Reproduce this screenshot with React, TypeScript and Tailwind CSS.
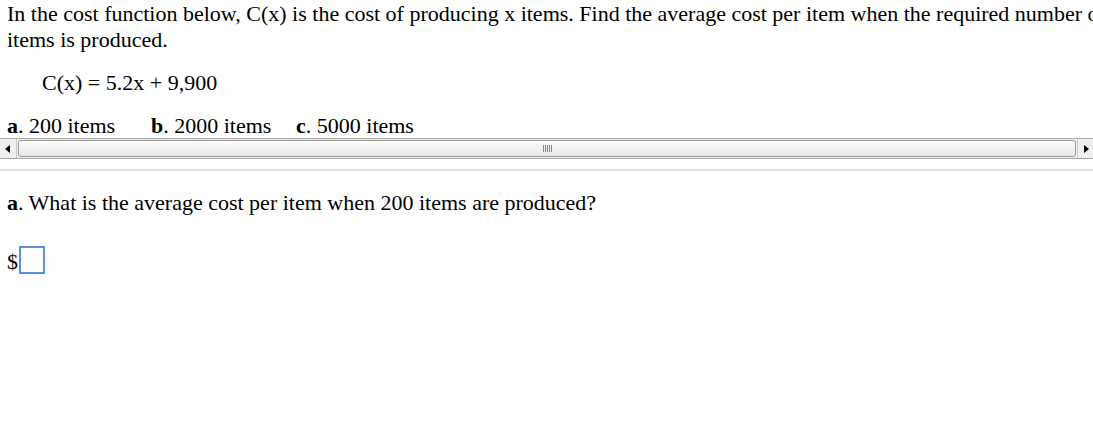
export default function App() {
  return (
    <div className="w-[1093px] h-[442px] bg-white overflow-hidden text-black font-['Liberation_Serif',serif] text-[22px] leading-[26px]">
      {/* Question stem */}
      <div className="px-[7px] pt-[1px] whitespace-nowrap">
        <p>
          In the cost function below, C(x) is the cost of producing x items. Find the average cost per item when the
          required number of
        </p>
        <p>items is produced.</p>
      </div>

      {/* Formula */}
      <div className="pl-[42px] pt-[17px]">C(x) = 5.2x + 9,900</div>

      {/* Parts */}
      <div className="flex pl-[7px] pt-[17px]">
        <span className="w-[144px]">
          <b>a</b>. 200 items
        </span>
        <span className="w-[145px]">
          <b>b</b>. 2000 items
        </span>
        <span>
          <b>c</b>. 5000 items
        </span>
      </div>

      {/* Horizontal scrollbar */}
      <div className="flex h-[21px] border-y border-[#a9a9a9] bg-[#f0f0f0] mt-[-1px]">
        <div className="w-[17px] flex items-center justify-center border-r border-[#c8c8c8]">
          <svg width="6" height="8" viewBox="0 0 6 8">
            <path d="M5 0 L0 4 L5 8 Z" fill="#000" />
          </svg>
        </div>
        <div className="flex-1 px-[1px] py-[1px]">
          <div className="h-full rounded-[3px] border border-[#9a9a9a] bg-gradient-to-b from-[#fdfdfd] to-[#e6e6e6] flex items-center justify-center">
            <div className="flex gap-[1px]">
              <span className="w-[1px] h-[7px] bg-[#8a8a8a]" />
              <span className="w-[1px] h-[7px] bg-[#8a8a8a]" />
              <span className="w-[1px] h-[7px] bg-[#8a8a8a]" />
              <span className="w-[1px] h-[7px] bg-[#8a8a8a]" />
              <span className="w-[1px] h-[7px] bg-[#8a8a8a]" />
            </div>
          </div>
        </div>
        <div className="w-[16px] flex items-center justify-center border-l border-[#c8c8c8]">
          <svg width="6" height="8" viewBox="0 0 6 8">
            <path d="M1 0 L6 4 L1 8 Z" fill="#000" />
          </svg>
        </div>
      </div>

      {/* Divider */}
      <div className="mt-[10px] h-[2px] bg-[#e0e0e0]" />

      {/* Question part a */}
      <div className="pl-[7px] pt-[19px]">
        <b>a</b>. What is the average cost per item when 200 items are produced?
      </div>

      {/* Answer */}
      <div className="flex items-end pl-[7px] pt-[30px]">
        <span className="leading-[24px]">$</span>
        <div className="w-[26px] h-[28px] border-2 border-[#5b8ee6] ml-[1px]" />
      </div>
    </div>
  );
}
